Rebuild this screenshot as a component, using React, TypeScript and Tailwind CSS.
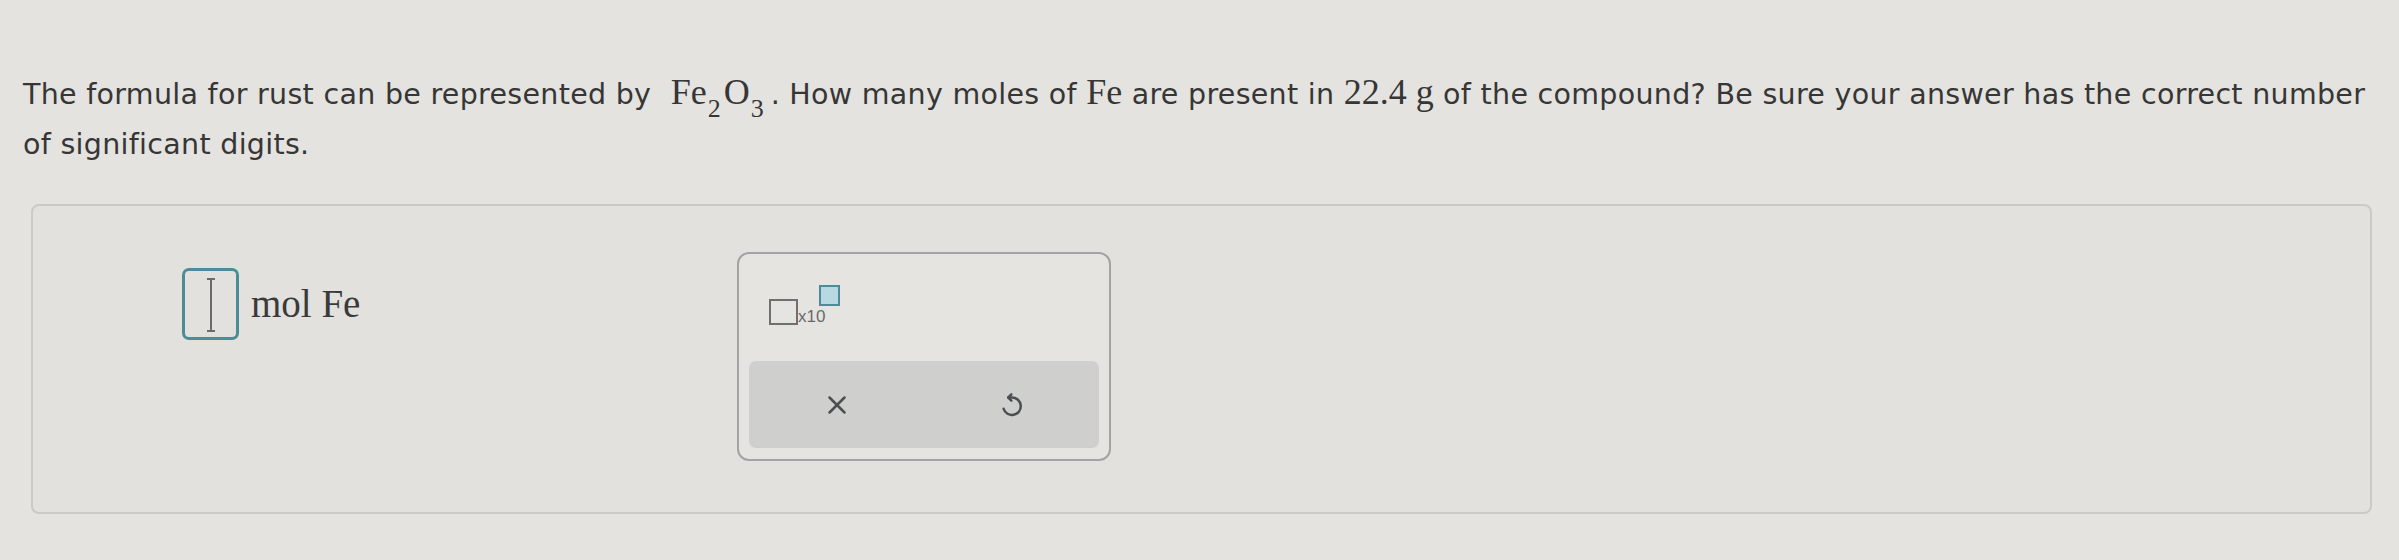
import { X } from 'lucide-react';

function UndoIcon() {
  return (
    <svg width="30" height="30" viewBox="0 0 24 24" fill="none" stroke="#4b4f52" strokeWidth="2" strokeLinecap="round" strokeLinejoin="round">
      <path d="M11.5 3.5 L9 6 L11.5 8.5" />
      <path d="M9 6 H12 A7 7 0 1 1 5.3 15" />
    </svg>
  );
}

const serif = { fontFamily: '"Liberation Serif", serif' };

function App() {
  return (
    <div className="min-h-[560px] w-full bg-[#e4e3df] px-[23px] pt-[67px] text-[#363636]" style={{ fontFamily: '"DejaVu Sans", Verdana, sans-serif' }}>
      <p className="text-[28.5px] leading-[50px] tracking-[0.3px] whitespace-nowrap">
        The formula for rust can be represented by{' '}
        <span className="pl-[10px] text-[36px] tracking-normal" style={serif}>
          Fe<sub className="bottom-[-13px] pl-[1px] pr-[3px] text-[26px]">2</sub>O<sub className="bottom-[-13px] pl-[1px] pr-[3px] text-[26px]">3</sub>
        </span>
        <span className="ml-[4px]">.</span> How many moles of{' '}
        <span className="text-[36px] tracking-normal" style={serif}>Fe</span> are present in{' '}
        <span className="text-[36px] tracking-normal" style={serif}>22.4 g</span> of the compound? Be sure your answer has the correct number
        <br />
        of significant digits.
      </p>

      <div className="mt-[34px] ml-[8px] mr-[4px] flex h-[310px] items-start rounded-[8px] border-2 border-[#cbcac6] bg-[#e2e1dd] pl-[149px] pt-[46px]">
        <div className="mt-[16px] flex w-[555px] items-center">
          <div className="relative h-[72px] w-[57px] rounded-[7px] border-[3px] border-[#4d8b98]">
            <div className="absolute left-1/2 top-[8px] h-[52px] w-[2px] -translate-x-1/2 bg-[#6a6a6a]" />
            <div className="absolute left-1/2 top-[7px] h-[2px] w-[8px] -translate-x-1/2 bg-[#6a6a6a]" />
            <div className="absolute left-1/2 top-[59px] h-[2px] w-[8px] -translate-x-1/2 bg-[#6a6a6a]" />
          </div>
          <span className="ml-[12px] text-[39px] text-[#3a3a3a]" style={serif}>
            mol Fe
          </span>
        </div>

        <div className="flex h-[209px] w-[374px] flex-col rounded-[12px] border-2 border-[#a3a3a1] bg-[#e5e4e0] px-[10px]">
          <div className="ml-[20px] mt-[31px] flex items-start">
            <div className="mt-[14px] h-[26px] w-[29px] border-2 border-[#6f6f6f]" />
            <span className="mt-[23px] text-[17px] leading-none text-[#6a6a6a]" style={{ fontFamily: '"Liberation Sans", Arial, sans-serif' }}>
              x10
            </span>
            <div className="-ml-[6px] h-[21px] w-[21px] border-2 border-[#4d8b98] bg-[#b8d9e2]" />
          </div>
          <div className="mt-[36px] flex h-[87px] items-center justify-around rounded-[7px] bg-[#cfcfcd]">
            <X size={30} strokeWidth={2} color="#4b4f52" />
            <UndoIcon />
          </div>
        </div>
      </div>
    </div>
  );
}

export default App
